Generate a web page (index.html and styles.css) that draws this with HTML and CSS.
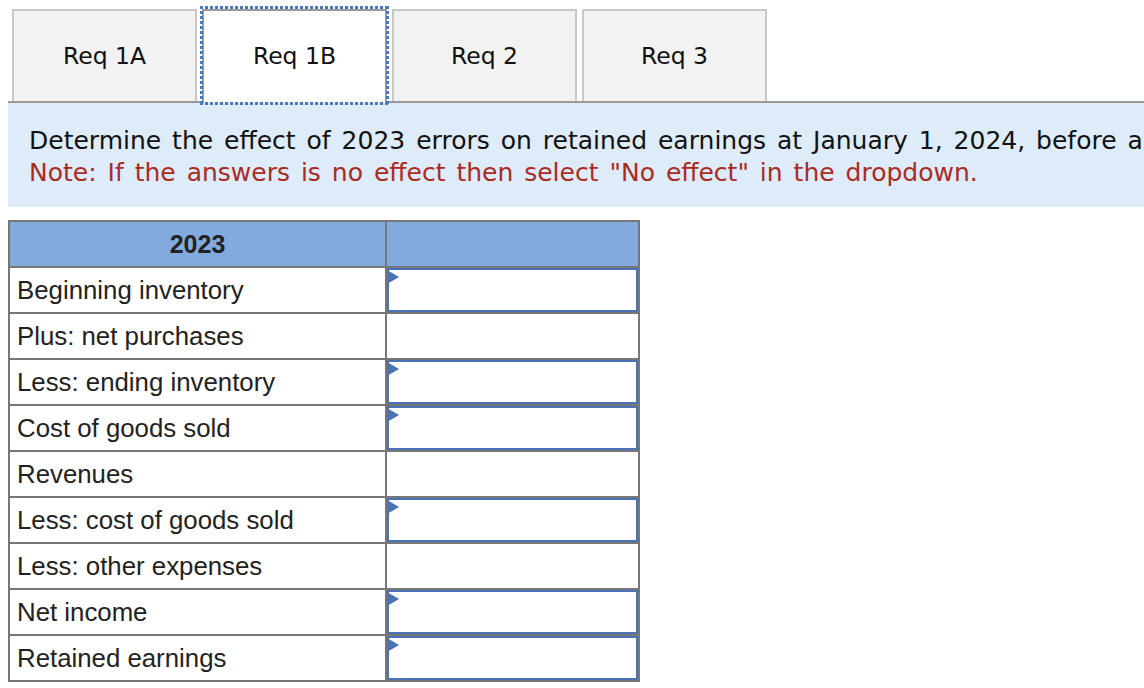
FILE: index.html
```html
<!DOCTYPE html>
<html>
<head>
<meta charset="utf-8">
<link rel="stylesheet" href="styles.css">
</head>
<body>
<div class="page">
  <div class="tabs">
    <div class="tab">Req 1A</div>
    <div class="tab active">Req 1B</div>
    <div class="tab">Req 2</div>
    <div class="tab">Req 3</div>
  </div>
  <div class="instructions">
    <div class="line">Determine the effect of 2023 errors on retained earnings at January 1, 2024, before any correction.</div>
    <div class="line note">Note: If the answers is no effect then select "No effect" in the dropdown.</div>
  </div>
  <table class="grid">
    <tr class="head"><th class="label-col">2023</th><th class="val-col"></th></tr>
    <tr><td class="label">Beginning inventory</td><td class="val"><div class="inp"></div></td></tr>
    <tr><td class="label">Plus: net purchases</td><td class="val"></td></tr>
    <tr><td class="label">Less: ending inventory</td><td class="val"><div class="inp"></div></td></tr>
    <tr><td class="label">Cost of goods sold</td><td class="val"><div class="inp"></div></td></tr>
    <tr><td class="label">Revenues</td><td class="val"></td></tr>
    <tr><td class="label">Less: cost of goods sold</td><td class="val"><div class="inp"></div></td></tr>
    <tr><td class="label">Less: other expenses</td><td class="val"></td></tr>
    <tr><td class="label">Net income</td><td class="val"><div class="inp"></div></td></tr>
    <tr><td class="label">Retained earnings</td><td class="val"><div class="inp"></div></td></tr>
  </table>
</div>
</body>
</html>
```
FILE: styles.css
```css
html, body {
  margin: 0;
  padding: 0;
  overflow: hidden;
  background: #ffffff;
}
.page {
  padding: 0 0 0 8px;
  width: 1400px;
}
.tabs {
  display: flex;
  align-items: flex-start;
  gap: 5px;
  height: 92px;
  padding: 9px 0 0 4px;
  border-bottom: 2px solid #999999;
}
.tab {
  position: relative;
  box-sizing: border-box;
  width: 185px;
  height: 92px;
  border: 2px solid #c8c8c8;
  border-bottom: none;
  background: #f2f2f2;
  display: flex;
  align-items: center;
  justify-content: center;
  font-family: "DejaVu Sans", Verdana, sans-serif;
  font-size: 23.5px;
  color: #111111;
}
.tab.active {
  background: #ffffff;
  border-color: #9a9a9a;
  height: 94px;
  padding-bottom: 2px;
  z-index: 1;
}
.tab.active::after {
  content: "";
  position: absolute;
  left: -4px;
  right: -4px;
  top: -5px;
  bottom: -2px;
  background:
    repeating-linear-gradient(90deg, #4a78c2 0 3px, transparent 3px 5px) top left / 100% 3px no-repeat,
    repeating-linear-gradient(90deg, #4a78c2 0 3px, transparent 3px 5px) bottom left / 100% 3px no-repeat,
    repeating-linear-gradient(180deg, #4a78c2 0 3px, transparent 3px 5px) top left / 3px 100% no-repeat,
    repeating-linear-gradient(180deg, #4a78c2 0 3px, transparent 3px 5px) top right / 3px 100% no-repeat;
}
.instructions {
  background: #deebf8;
  padding: 22px 0 18px 21px;
  font-family: "DejaVu Sans", Verdana, sans-serif;
  font-size: 25px;
  word-spacing: 3px;
  line-height: 32px;
  color: #111111;
  white-space: nowrap;
}
.note {
  color: #aa2a24;
}
.grid {
  margin-top: 13px;
  border-collapse: collapse;
  font-family: "Liberation Sans", Arial, sans-serif;
  font-size: 25.8px;
  color: #222222;
}
.grid th, .grid td {
  border: 2px solid #777777;
  padding: 0;
  height: 44px;
}
.head th {
  background: #82aadf;
  font-weight: bold;
  font-size: 25px;
  text-align: center;
}
.label-col {
  width: 375px;
}
.val-col {
  width: 251px;
}
.label {
  padding-left: 7px !important;
  text-align: left;
}
.val {
  vertical-align: top;
}
.inp {
  position: relative;
  box-sizing: border-box;
  height: 44px;
  border: 2px solid #4a72b5;
  background: #ffffff;
}
.inp::before {
  content: "";
  position: absolute;
  left: -2px;
  top: 0;
  border-left: 12px solid #4a72b5;
  border-top: 7.5px solid transparent;
  border-bottom: 7.5px solid transparent;
}
```
